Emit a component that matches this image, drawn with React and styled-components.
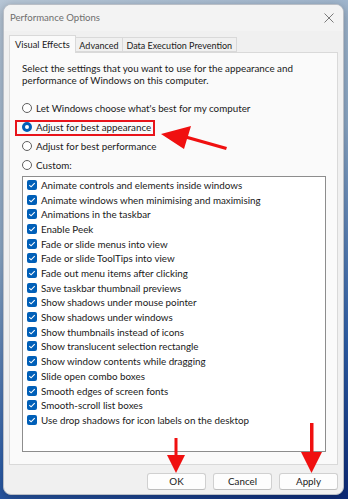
import React from "react";
import styled, { createGlobalStyle } from "styled-components";

const Global = createGlobalStyle`
  html, body { margin: 0; padding: 0; }
  body {
    width: 348px; height: 499px; overflow: hidden;
    background: linear-gradient(160deg, #b7c6d6 0%, #8aa6c4 40%, #2d5ea8 75%, #0c2a78 100%);
    font-family: Lato, "Noto Sans", sans-serif;
  }
`;

const Page = styled.div`
  position: relative;
  width: 348px;
  height: 499px;
  padding: 4px 4px 4px 3px;
  box-sizing: border-box;
`;

const Window = styled.div`
  width: 341px;
  height: 491px;
  box-sizing: border-box;
  background: #f0f0f0;
  border: 1px solid #b9bec6;
  border-radius: 8px;
  display: flex;
  flex-direction: column;
  overflow: hidden;
  box-shadow: 0 2px 8px rgba(0,0,0,0.25);
`;

const TitleBar = styled.div`
  height: 26px;
  display: flex;
  align-items: center;
  justify-content: space-between;
  padding: 0 9px 0 6px;
  flex: none;
  background: #f3f3f3;
`;

const Title = styled.div`
  font-size: 9.6px;
  color: #6e6e6e;
  margin-top: -1px;
`;

const Close = styled.svg`
  width: 10px;
  height: 10px;
  margin-top: -1px;
`;

const TabRow = styled.div`
  display: flex;
  align-items: flex-end;
  padding-left: 5px;
  height: 21px;
  flex: none;
  position: relative;
  z-index: 1;
`;

const Tab = styled.div`
  font-size: ${p => (p.$active ? "9.3px" : "9px")};
  color: #1a1a1a;
  height: ${p => (p.$active ? "18px" : "15px")};
  padding: 0 ${p => (p.$active ? "5px" : "3.5px")};
  display: flex;
  align-items: center;
  box-sizing: border-box;
  border: 1px solid #d9d9d9;
  border-bottom: ${p => (p.$active ? "none" : "1px solid #d9d9d9")};
  background: ${p => (p.$active ? "#fafafa" : "#f0f0f0")};
  margin-left: ${p => (p.$active ? "0" : "-1px")};
  margin-bottom: ${p => (p.$active ? "-1px" : "0")};
  padding-top: ${p => (p.$active ? "0" : "1px")};
`;

const Panel = styled.div`
  margin: 0 5px 0 5px;
  height: 413px;
  box-sizing: border-box;
  border: 1px solid #d9d9d9;
  background: #fafafa;
  padding: 10px 11px 0 12px;
  display: flex;
  flex-direction: column;
  flex: none;
`;

const Desc = styled.p`
  margin: 0;
  font-size: 9.8px;
  line-height: 11.5px;
  color: #1a1a1a;
  white-space: nowrap;
`;

const RadioGroup = styled.div`
  margin-top: 12.5px;
  display: flex;
  flex-direction: column;
`;

const RadioRow = styled.div`
  height: 18.9px;
  display: flex;
  align-items: center;
  gap: 4px;
  font-size: 9.8px;
  color: #1a1a1a;
`;

const RadioDot = styled.span`
  width: 10px;
  height: 10px;
  box-sizing: border-box;
  border-radius: 50%;
  flex: none;
  border: ${p => (p.$on ? "3px solid #005fb8" : "1px solid #5f5f5f")};
  background: #fff;
`;

const ListBox = styled.div`
  margin-top: 1.5px;
  height: 276px;
  box-sizing: border-box;
  border: 1px solid #8d8d8d;
  background: #fff;
  padding: 1px 0 0 4px;
  display: flex;
  flex-direction: column;
`;

const Item = styled.div`
  height: 14.7px;
  display: flex;
  align-items: center;
  gap: 4px;
  font-size: 9.8px;
  color: #1a1a1a;
  white-space: nowrap;
`;

const Check = styled.span`
  width: 10px;
  height: 10px;
  border-radius: 2px;
  background: #005fb8;
  flex: none;
  display: flex;
  align-items: center;
  justify-content: center;
`;

const ButtonRow = styled.div`
  display: flex;
  justify-content: flex-end;
  gap: 7px;
  padding: 7.5px 5px 0 0;
`;

const Button = styled.div`
  width: 59px;
  height: 17px;
  box-sizing: border-box;
  border: 1px solid #d0d0d0;
  border-bottom-color: #bdbdbd;
  border-radius: 3px;
  background: #fdfdfd;
  font-size: 9.8px;
  color: #1a1a1a;
  display: flex;
  align-items: center;
  justify-content: center;
`;

const Highlight = styled.div`
  position: absolute;
  left: 15px;
  top: 120px;
  width: 140px;
  height: 16px;
  box-sizing: border-box;
  border: 2px solid #e8141b;
`;

const Annotations = styled.svg`
  position: absolute;
  left: 0;
  top: 0;
  width: 348px;
  height: 499px;
  pointer-events: none;
`;

const items = [
  "Animate controls and elements inside windows",
  "Animate windows when minimising and maximising",
  "Animations in the taskbar",
  "Enable Peek",
  "Fade or slide menus into view",
  "Fade or slide ToolTips into view",
  "Fade out menu items after clicking",
  "Save taskbar thumbnail previews",
  "Show shadows under mouse pointer",
  "Show shadows under windows",
  "Show thumbnails instead of icons",
  "Show translucent selection rectangle",
  "Show window contents while dragging",
  "Slide open combo boxes",
  "Smooth edges of screen fonts",
  "Smooth-scroll list boxes",
  "Use drop shadows for icon labels on the desktop",
];

const radios = [
  ["Let Windows choose what's best for my computer", false],
  ["Adjust for best appearance", true],
  ["Adjust for best performance", false],
  ["Custom:", false],
];

export default function App() {
  return (
    <>
      <Global />
      <Page>
        <Window>
          <TitleBar>
            <Title>Performance Options</Title>
            <Close viewBox="0 0 10 10">
              <path d="M0.5 0.5 L9.5 9.5 M9.5 0.5 L0.5 9.5" stroke="#7a7a7a" strokeWidth="1" />
            </Close>
          </TitleBar>
          <TabRow>
            <Tab $active>Visual Effects</Tab>
            <Tab>Advanced</Tab>
            <Tab>Data Execution Prevention</Tab>
          </TabRow>
          <Panel>
            <Desc>
              Select the settings that you want to use for the appearance and
              <br />
              performance of Windows on this computer.
            </Desc>
            <RadioGroup>
              {radios.map(([label, on]) => (
                <RadioRow key={label}>
                  <RadioDot $on={on} />
                  {label}
                </RadioRow>
              ))}
            </RadioGroup>
            <ListBox>
              {items.map(t => (
                <Item key={t}>
                  <Check>
                    <svg width="8" height="8" viewBox="0 0 8 8">
                      <path d="M1.3 4.1 L3.1 5.8 L6.7 2.1" fill="none" stroke="#fff" strokeWidth="1.1" />
                    </svg>
                  </Check>
                  {t}
                </Item>
              ))}
            </ListBox>
          </Panel>
          <ButtonRow>
            <Button>OK</Button>
            <Button>Cancel</Button>
            <Button>Apply</Button>
          </ButtonRow>
        </Window>
        <Highlight />
        <Annotations viewBox="0 0 348 499">
          <path d="M161 134 L191 126 L188 136 L227 147 L226 150 L187 139 L184 149 Z" fill="#f01010" />
          <rect x="174.5" y="438" width="3" height="20" fill="#f01010" />
          <path d="M167 455 L185 455 L176 473 Z" fill="#f01010" />
          <rect x="310" y="423" width="3.5" height="33" fill="#f01010" />
          <path d="M301 452 L322 452 L311.5 473 Z" fill="#f01010" />
        </Annotations>
      </Page>
    </>
  );
}
